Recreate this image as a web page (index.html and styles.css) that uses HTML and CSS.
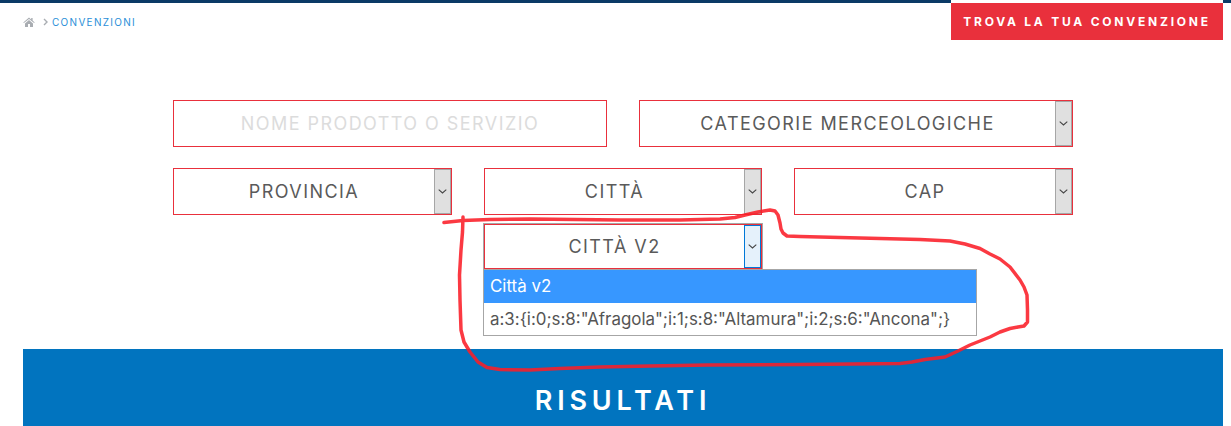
FILE: index.html
```html
<!DOCTYPE html>
<html lang="it">
<head>
<meta charset="utf-8">
<title>Convenzioni</title>
<link rel="stylesheet" href="styles.css">
</head>
<body>
<div class="topline"><span class="seg left"></span><span class="seg gap"></span><span class="seg right"></span></div>
<header class="top">
  <nav class="crumbs">
    <svg class="home" viewBox="0 0 12 10" width="12" height="10"><path d="M6 0.6 0.3 5.4l.6.7L6 1.9l5.1 4.2.6-.7L9.6 3.6V1H8.2v1.4zM2 6.4V10h3V7h2v3h3V6.4L6 3z"/></svg>
    <svg class="sep" viewBox="0 0 5 8" width="5" height="8"><path d="M1 1l3 3-3 3"/></svg>
    <span class="crumb">CONVENZIONI</span>
  </nav>
  <a class="cta">TROVA LA TUA CONVENZIONE</a>
</header>
<main class="filters">
  <div class="row two">
    <div class="field placeholder">NOME PRODOTTO O SERVIZIO</div>
    <div class="field select"><span class="label">CATEGORIE MERCEOLOGICHE</span><span class="arrow"><svg viewBox="0 0 9 5" width="9" height="5"><path d="M.7.7 4.5 4 8.3.7"/></svg></span></div>
  </div>
  <div class="row three">
    <div class="field select"><span class="label">PROVINCIA</span><span class="arrow"><svg viewBox="0 0 9 5" width="9" height="5"><path d="M.7.7 4.5 4 8.3.7"/></svg></span></div>
    <div class="field select"><span class="label">CITTÀ</span><span class="arrow"><svg viewBox="0 0 9 5" width="9" height="5"><path d="M.7.7 4.5 4 8.3.7"/></svg></span></div>
    <div class="field select"><span class="label">CAP</span><span class="arrow"><svg viewBox="0 0 9 5" width="9" height="5"><path d="M.7.7 4.5 4 8.3.7"/></svg></span></div>
  </div>
  <div class="open-wrap">
    <div class="field select open"><span class="label">CITTÀ V2</span><span class="arrow"><svg viewBox="0 0 9 5" width="9" height="5"><path d="M.7.7 4.5 4 8.3.7"/></svg></span></div>
    <ul class="menu">
      <li class="on">Città v2</li>
      <li>a:3:{i:0;s:8:"Afragola";i:1;s:8:"Altamura";i:2;s:6:"Ancona";}</li>
    </ul>
  </div>
</main>
<section class="results"><h2>RISULTATI</h2></section>
<svg class="scribble" viewBox="0 0 1231 426" width="1231" height="426"><path class="ink" d="M444 222.500L463 220.500L490 219.500L530 219L620 220L680 220L720 219L735 217.500L745 215L758 212L770 210L775 211L778 215L780 223L781 229L783 233L787 236L800 236.500L860 238L920 239.500L950 241L965 244L980 248.500L990 254L1000 259L1010 267L1020 280L1024 287L1027 295L1027.500 310L1027.500 322L1024 326L1018 327L1010 328.500L1000 332L990 337L980 341L970 345L958 351L945 357L925 359.500L912 362L900 363.500L853 364L800 364.500L707 365L650 366L600 367L560 368.500L530 370L500 369.500L487 367.500L478 362L470 352L464 342L461 330L460 300L459.500 275L461 250L462.500 232L463 217"/></svg>
</body>
</html>
```
FILE: styles.css
```css
* { box-sizing: border-box; }
html, body { margin: 0; padding: 0; }
body { width: 1231px; height: 426px; overflow: hidden; position: relative; background: #fff; font-family: "Inter", "Liberation Sans", sans-serif; color: #555; }
.topline { height: 3px; display: flex; }
.seg { display: block; height: 3px; background: #0b3a66; }
.seg.left { width: 951px; }
.seg.gap { width: 272px; background: #fff; }
.seg.right { flex: 1; }
.top { display: flex; justify-content: space-between; align-items: flex-start; padding: 0 8px 0 23px; height: 97px; }
.crumbs { display: flex; align-items: center; gap: 5px; padding-top: 14px; }
.home { fill: #a9adb2; }
.sep { fill: none; stroke: #a9adb2; stroke-width: 1.4; margin-left: 3px; }
.crumb { font-size: 10px; letter-spacing: 1.3px; color: #2a8fd8; margin-left: -1px; line-height: 10px; }
.cta { background: #e9303c; color: #fff; font-size: 12px; font-weight: 700; letter-spacing: 2.77px; width: 272px; height: 37px; display: flex; align-items: center; justify-content: center; white-space: nowrap; }
.filters { padding: 0 158px 0 173px; display: flex; flex-direction: column; }
.row { display: grid; }
.row.two { grid-template-columns: 434px 434px; column-gap: 32px; height: 47px; margin-bottom: 21px; }
.row.three { grid-template-columns: 279px 278px 279px; column-gap: 32px; height: 47px; margin-bottom: 8px; }
.field { border: 1px solid #e9303c; height: 47px; display: flex; align-items: stretch; font-size: 18px; letter-spacing: 1.45px; color: #5a5a5a; background: #fff; }
.placeholder { align-items: center; justify-content: center; color: #dcdcdc; padding-bottom: 1px; }
.two .label { padding-bottom: 1px; }
.label { flex: 1; display: flex; align-items: center; justify-content: center; }
.arrow { width: 17px; background: #e0e0e0; border: 1px solid #a6a6a6; display: flex; align-items: center; justify-content: center; }
.arrow svg { fill: none; stroke: #444; stroke-width: 1.1; }
.open-wrap { width: 494px; margin-left: 311px; display: flex; flex-direction: column; }
.open { width: 278px; height: 45px; margin-top: 1px; outline: 1px solid #a6a6a6; }
.open .arrow { background: #e5f1fb; border: 1px solid #0078d7; }
.menu { list-style: none; margin: 0 0 0 -1px; padding: 0; border: 1px solid #a6a6a6; width: 494px; font-size: 16.9px; background: #fff; color: #555; height: 67px; }
.menu li { height: 33px; line-height: 33px; padding-left: 6px; white-space: nowrap; }
.menu li.on { background: #3797ff; color: #fff; }
.results { position: absolute; left: 23px; top: 349px; width: 1200px; height: 77px; background: #0174bf; display: flex; justify-content: center; padding-top: 37px; }
.results h2 { margin: 0; font-size: 27px; font-weight: 600; letter-spacing: 4.8px; color: #fff; line-height: 30px; }
.scribble { position: absolute; left: 0; top: 0; pointer-events: none; }
.ink { fill: none; stroke: #fa1e28; stroke-opacity: .88; stroke-width: 3.5; stroke-linecap: round; stroke-linejoin: round; }
```
